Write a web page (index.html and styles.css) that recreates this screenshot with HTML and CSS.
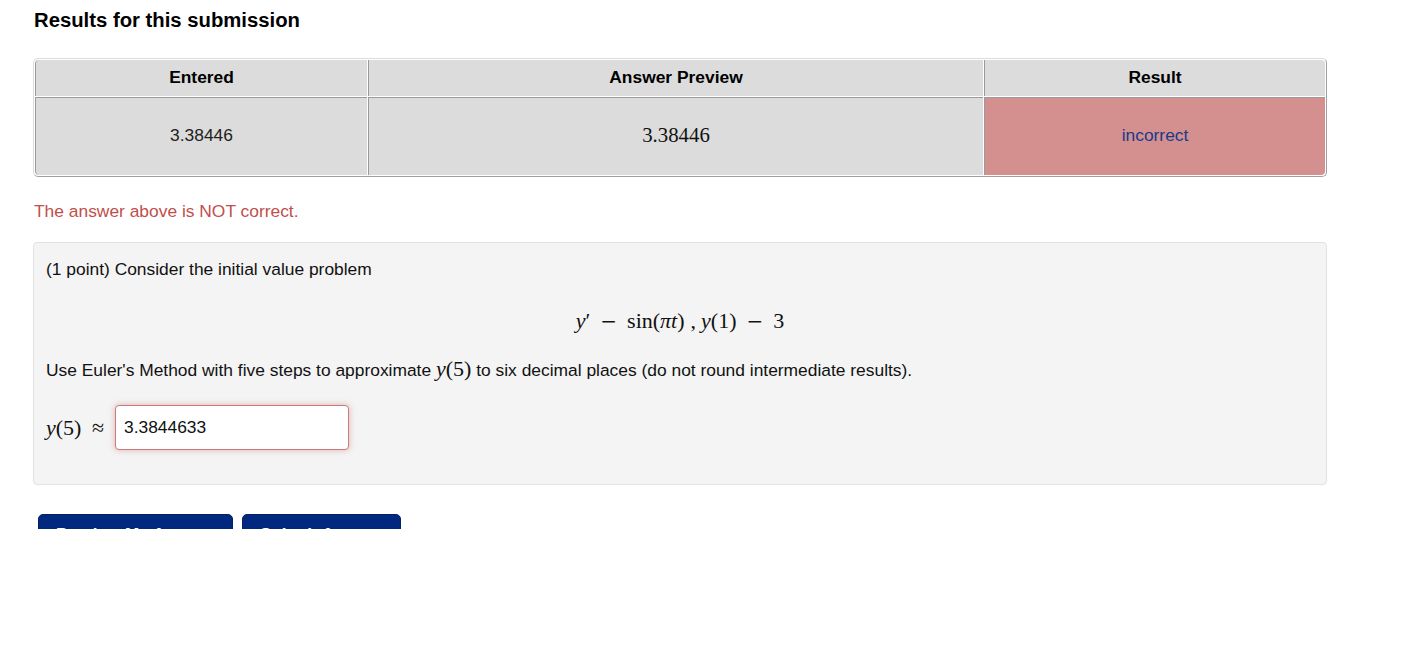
FILE: index.html
```html
<!DOCTYPE html>
<html>
<head>
<meta charset="utf-8">
<link rel="stylesheet" href="styles.css">
</head>
<body>
<div class="page">
  <h2 class="title">Results for this submission</h2>
  <table class="results">
    <colgroup>
      <col class="c1"><col class="c2"><col class="c3">
    </colgroup>
    <thead>
      <tr><th>Entered</th><th>Answer Preview</th><th>Result</th></tr>
    </thead>
    <tbody>
      <tr>
        <td>3.38446</td>
        <td class="preview">3.38446</td>
        <td class="bad">incorrect</td>
      </tr>
    </tbody>
  </table>
  <p class="error">The answer above is NOT correct.</p>
  <div class="problem">
    <p class="intro">(1 point) Consider the initial value problem</p>
    <div class="display"><span class="mi">y</span>′<span class="op">−</span>sin(<span class="mi">πt</span>)<span class="sep">,</span><span class="mi">y</span>(1)<span class="op">−</span>3</div>
    <p class="task">Use Euler's Method with five steps to approximate <span class="inl"><span class="mi">y</span>(5)</span> to six decimal places (do not round intermediate results).</p>
    <div class="answer">
      <span class="label"><span class="mi">y</span>(5) <span class="approx">≈</span></span>
      <input class="field" type="text" value="3.3844633">
    </div>
  </div>
  <div class="buttons">
    <button class="btn b1">Preview My Answers</button>
    <button class="btn b2">Submit Answers</button>
  </div>
</div>
</body>
</html>
```

FILE: styles.css
```css
html, body {
  margin: 0;
  padding: 0;
  background: #fff;
}
body {
  font-family: "Liberation Sans", Arial, sans-serif;
  font-size: 17.4px;
  color: #111;
}
.page {
  margin-left: 33px;
  width: 1294px;
}
.title {
  font-size: 20.3px;
  font-weight: bold;
  margin: 9px 0 0 1px;
  line-height: 23px;
  color: #000;
}
.results {
  margin-top: 26px;
  width: 1294px;
  table-layout: fixed;
  border-collapse: separate;
  border-spacing: 1px;
  border: 1px solid;
  border-color: #dcdcdc #a0a0a0 #a0a0a0 #dcdcdc;
  border-radius: 5px;
  background: #fff;
}
.c1 { width: 332px; }
.c2 { width: 615px; }
.c3 { width: 341px; }
.results th, .results td {
  background: #dcdcdc;
  text-align: center;
  vertical-align: middle;
  border-left: 1px solid #9a9a9a;
  padding: 0;
}
.results th:first-child { border-top-left-radius: 4px; }
.results th:last-child { border-top-right-radius: 4px; }
.results td:first-child { border-bottom-left-radius: 4px; }
.results td:last-child { border-bottom-right-radius: 4px; }
.results th {
  height: 34px;
  font-weight: bold;
  font-size: 17.4px;
  color: #000;
  padding-bottom: 2px;
}
.results td {
  height: 74px;
  border-top: 1px solid #9a9a9a;
  color: #222;
  padding-bottom: 3px;
}
.results td.preview {
  font-family: "Liberation Serif", "Times New Roman", serif;
  font-size: 20.8px;
  color: #111;
}
.results td.bad {
  background: #d4908f;
  color: #1a3a8c;
}
.error {
  color: #bf4f4c;
  margin: 24px 0 0 1px;
  line-height: 20px;
}
.problem {
  margin-top: 21px;
  background: #f4f4f4;
  border: 1px solid #e2e2e2;
  border-radius: 4px;
  padding: 15px 12px 0 12px;
  height: 226px;
}
.problem p {
  margin: 0;
  line-height: 22px;
}
.mi {
  font-style: italic;
}
.display {
  font-family: "Liberation Serif", "Times New Roman", serif;
  font-size: 22px;
  text-align: center;
  margin-top: 28px;
  line-height: 26px;
  color: #111;
}
.display .op {
  font-family: "DejaVu Serif", serif;
  font-size: 20px;
  margin: 0 10px;
}
.display .sep { margin: 0 5px 0 6px; }
.task {
  margin-top: 24px !important;
}
.inl {
  font-family: "Liberation Serif", "Times New Roman", serif;
  font-size: 22px;
}
.answer {
  display: flex;
  align-items: center;
  gap: 11px;
  margin-top: 24px;
}
.label {
  font-family: "Liberation Serif", "Times New Roman", serif;
  font-size: 22px;
  color: #111;
}
.approx {
  margin-left: 5px;
}
.field {
  box-sizing: border-box;
  width: 234px;
  height: 45px;
  border: 1px solid #c97b7a;
  border-radius: 4px;
  box-shadow: 0 0 6px rgba(201, 90, 88, 0.45);
  background: #fff;
  font-family: "Liberation Sans", Arial, sans-serif;
  font-size: 17.4px;
  color: #111;
  padding: 0 0 0 8px;
  margin: 0;
  outline: none;
}
.buttons {
  margin-top: 29px;
  height: 15px;
  overflow: hidden;
  display: flex;
  align-items: flex-start;
  gap: 9px;
  padding-left: 5px;
}
.btn {
  flex: none;
  border: 1px solid #00226a;
  border-radius: 5px;
  background: #00287f;
  color: #fff;
  font-family: "Liberation Sans", Arial, sans-serif;
  font-size: 17px;
  line-height: 20px;
  font-weight: bold;
  text-align: left;
  padding: 10px 0 10px 17px;
  margin: 0;
  display: block;
}
.b1 { width: 195px; }
.b2 { width: 159px; }
```
